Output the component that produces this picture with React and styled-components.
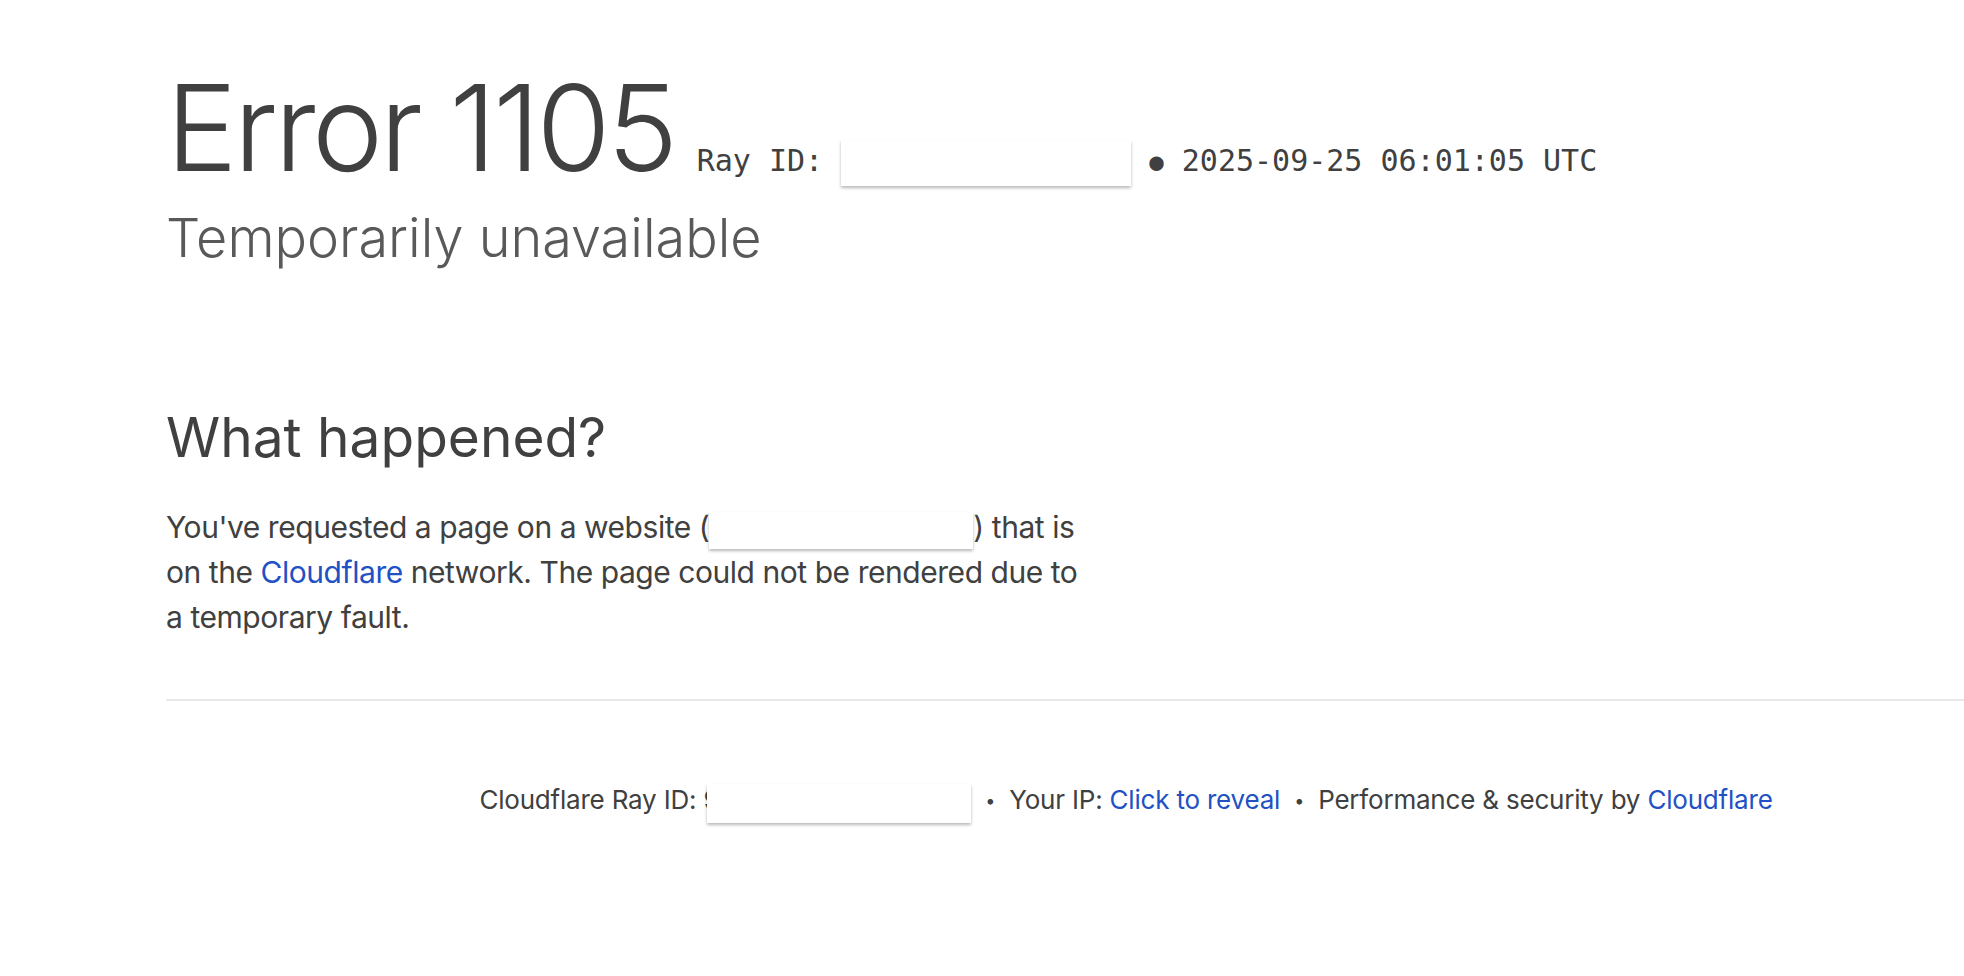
import React from 'react';
import styled, { createGlobalStyle } from 'styled-components';

const GlobalStyle = createGlobalStyle`
  html, body {
    margin: 0;
    padding: 0;
    background: #fff;
    overflow-x: hidden;
  }
  body {
    font-family: Inter, "Noto Sans", "Liberation Sans", sans-serif;
    color: #404040;
  }
`;

const Wrapper = styled.div`
  width: 1920px;
  margin-left: 166px;
  padding-top: 68px;
  padding-bottom: 80px;
`;

const Header = styled.header`
  display: flex;
  flex-direction: column;
`;

const Title = styled.h1`
  margin: 0;
  font-size: 120px;
  font-weight: 300;
  line-height: 1;
  letter-spacing: -3.6px;
  white-space: nowrap;
  color: #404040;
`;

const RayHeading = styled.small`
  margin-left: 22px;
  font-family: "DejaVu Sans Mono", "Liberation Mono", monospace;
  font-size: 30px;
  font-weight: 400;
  line-height: 1;
  letter-spacing: 0;
  color: #404040;
`;

const Dot = styled.span`
  font-size: 24px;
  vertical-align: 1px;
`;

const Redacted = styled.span`
  display: inline-block;
  width: ${p => p.$w}px;
  height: ${p => p.$h}px;
  vertical-align: ${p => p.$drop}px;
  margin-left: ${p => p.$shift || 0}px;
  background: #fff;
  box-shadow: 0 2px 3px rgba(0, 0, 0, 0.28);
  position: relative;
`;

const Subheadline = styled.h2`
  margin: 18px 0 0;
  font-size: 54px;
  font-weight: 300;
  line-height: 1.2;
  color: #595959;
`;

const Section = styled.section`
  margin-top: 133px;
  width: 920px;
`;

const SectionTitle = styled.h2`
  margin: 0;
  font-size: 55px;
  font-weight: 400;
  line-height: 1.2;
  color: #404040;
`;

const Paragraph = styled.p`
  margin: 35px 0 0;
  font-size: 30px;
  line-height: 45px;
  letter-spacing: -0.45px;
  color: #404040;
`;

const Link = styled.a`
  color: #2151c5;
  text-decoration: none;
`;

const Divider = styled.hr`
  margin: 59px 0 0;
  border: 0;
  height: 2px;
  background: #e9e9e9;
`;

const Footer = styled.footer`
  margin-top: 79px;
  font-size: 26px;
  line-height: 1.5;
  letter-spacing: -0.2px;
  text-align: center;
  white-space: nowrap;
  color: #404040;
`;

const Sep = styled.span`
  display: inline-block;
  margin: 0 14px;
  font-size: 18px;
  vertical-align: 2px;
`;

const App = () => {
  return (
    <>
      <GlobalStyle />
      <Wrapper>
        <Header>
          <Title>
            Error 1105
            <RayHeading>
              Ray ID: <Redacted $w={290} $h={46} $drop={-15} /> <Dot>●</Dot> 2025-09-25 06:01:05 UTC
            </RayHeading>
          </Title>
          <Subheadline>Temporarily unavailable</Subheadline>
        </Header>

        <Section>
          <SectionTitle>What happened?</SectionTitle>
          <Paragraph>
            You've requested a page on a website (<Redacted $w={264} $h={37} $drop={-11} />) that is
            on the <Link href="#">Cloudflare</Link> network. The page could not be rendered due to
            a temporary fault.
          </Paragraph>
        </Section>

        <Divider />

        <Footer>
          Cloudflare Ray ID: 9<Redacted $w={264} $h={39} $drop={-14} $shift={-12} />
          <Sep>•</Sep>
          Your IP: <Link href="#">Click to reveal</Link>
          <Sep>•</Sep>
          Performance &amp; security by <Link href="#">Cloudflare</Link>
        </Footer>
      </Wrapper>
    </>
  );
};

export default App;
